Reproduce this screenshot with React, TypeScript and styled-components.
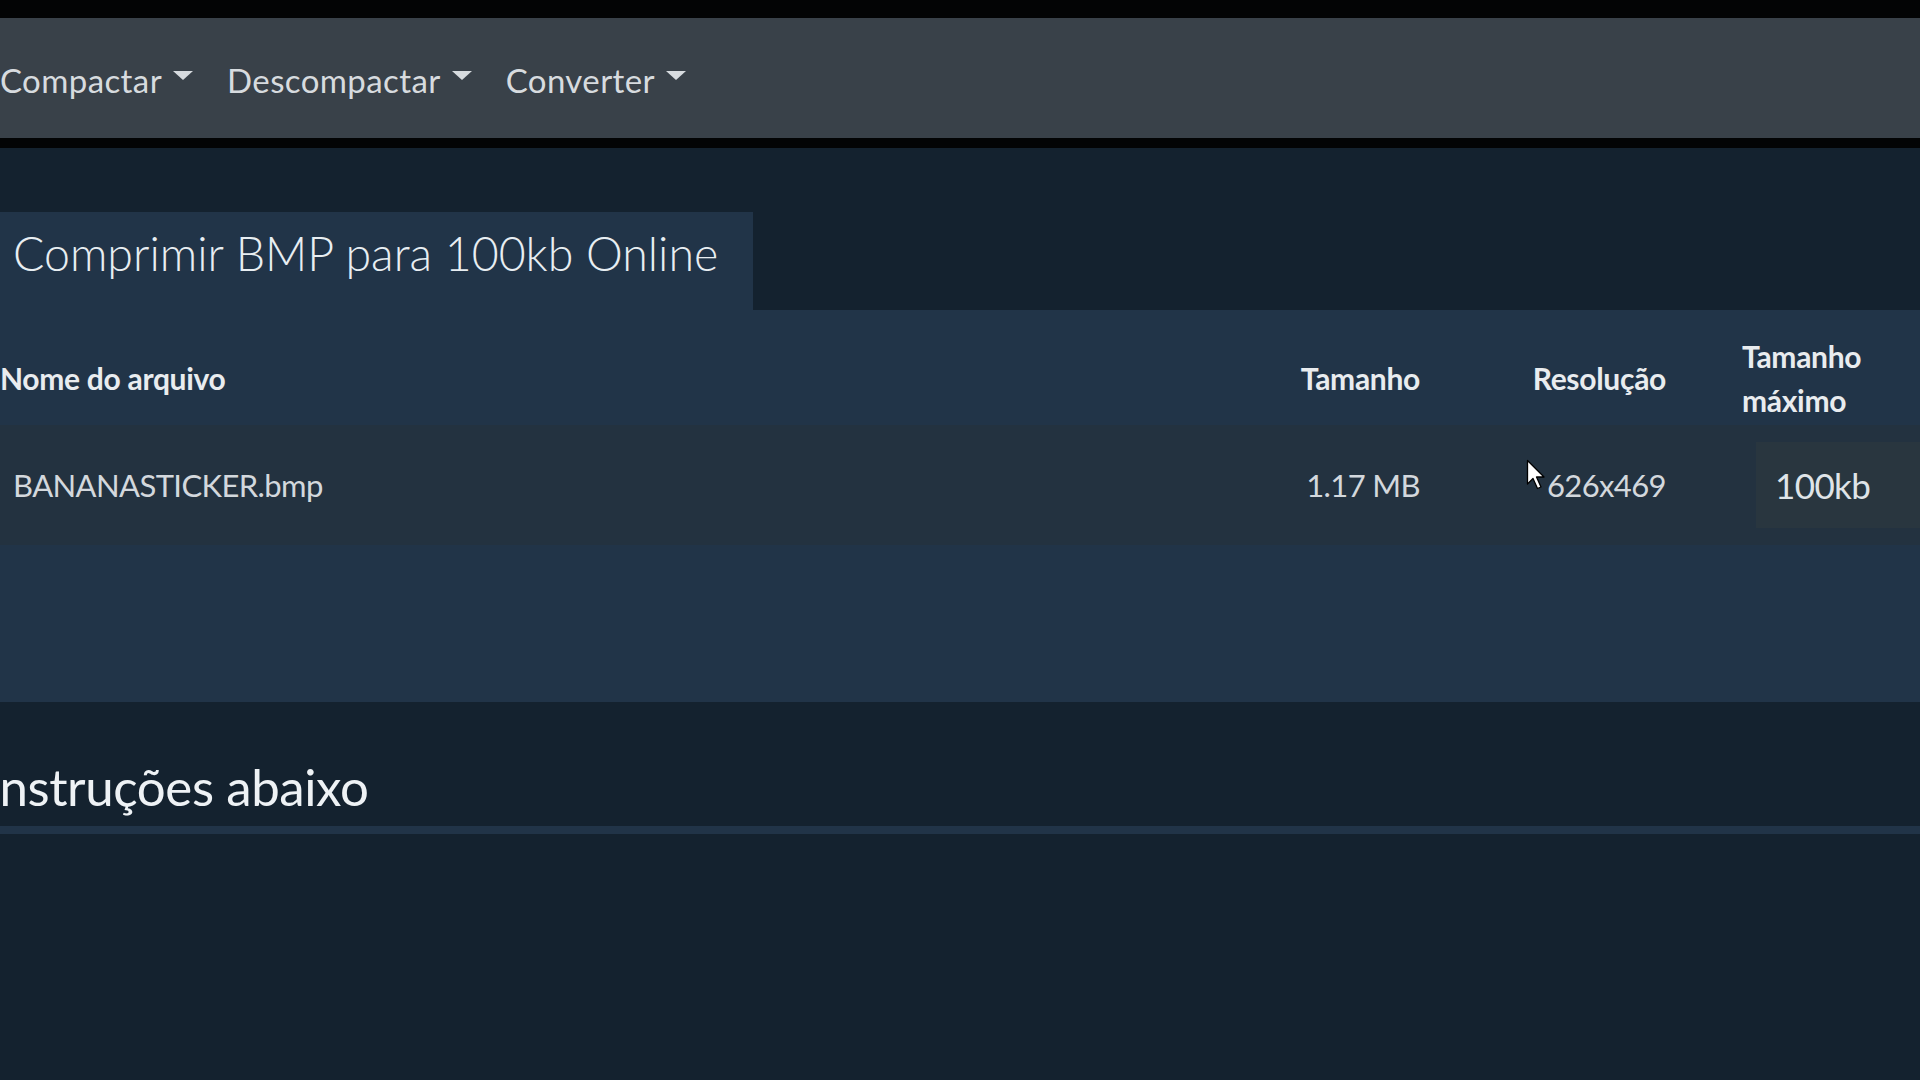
import styled, { createGlobalStyle } from "styled-components";

const GlobalStyle = createGlobalStyle`
	html, body {
		margin: 0;
		padding: 0;
		background: #14222f;
		overflow: hidden;
	}
	body {
		font-family: Lato, "Open Sans", sans-serif;
		color: #dde3e8;
	}
	* { box-sizing: border-box; }
`;

const Page = styled.div`
	width: 1920px;
	height: 1080px;
	overflow: hidden;
	background: #14222f;
	position: relative;
`;

const NavBar = styled.nav`
	height: 148px;
	background: #394149;
	border-top: 18px solid #030405;
	border-bottom: 10px solid #030405;
	display: flex;
	align-items: center;
	gap: 34px;
	padding-left: 0;
	padding-top: 3px;
`;

const NavItem = styled.span`
	display: flex;
	align-items: center;
	font-size: 33px;
	color: #d7dbdf;
	letter-spacing: 0.4px;

	&::after {
		content: "";
		display: inline-block;
		margin-left: 11px;
		margin-top: -8px;
		border-top: 9px solid #d7dbdf;
		border-left: 10px solid transparent;
		border-right: 10px solid transparent;
	}
`;

const Main = styled.main`
	margin-left: -14px;
	width: 1990px;
	padding-top: 64px;
`;

const TitleTab = styled.div`
	width: 767px;
	height: 98px;
	background: #213448;
	display: flex;
	align-items: center;
	padding-left: 27px;
	padding-bottom: 16px;
`;

const Title = styled.h1`
	margin: 0;
	font-size: 46.5px;
	font-weight: 300;
	color: #e8eef2;
	letter-spacing: 0;
`;

const Panel = styled.section`
	background: #213448;
	padding-bottom: 157px;
`;

const Row = styled.div<{ $head?: boolean }>`
	display: grid;
	grid-template-columns: 1284px 150px 246px 300px;
	align-items: center;
	height: ${(p) => (p.$head ? "115px" : "120px")};
	padding-top: ${(p) => (p.$head ? "20px" : "0")};
	background: ${(p) => (p.$head ? "#213448" : "#233240")};
	position: relative;
`;

const HeadCell = styled.div<{ $align?: string }>`
	font-size: 30px;
	font-weight: 700;
	color: #e9ecef;
	line-height: 44px;
	letter-spacing: -0.3px;
	text-align: ${(p) => p.$align || "left"};
	padding-left: 14px;
`;

const MaxHead = styled(HeadCell)`
	padding-left: 76px;
	width: 240px;
`;

const Cell = styled.div<{ $align?: string }>`
	font-size: 31px;
	color: #d3d8dd;
	letter-spacing: -0.6px;
	text-align: ${(p) => p.$align || "left"};
	padding-left: ${(p) => (p.$align ? "0" : "27px")};
`;

const SizeInput = styled.div`
	margin-left: 90px;
	width: 200px;
	height: 86px;
	background: #29363f;
	display: flex;
	align-items: center;
	padding-left: 19px;
	font-size: 35px;
	color: #dfe4e8;
	letter-spacing: -0.6px;
`;

const Cursor = styled.svg`
	position: absolute;
	left: 1540px;
	top: 34px;
`;

const Instructions = styled.h2`
	margin: 0;
	padding: 56px 0 10px 0;
	font-size: 51px;
	font-weight: 400;
	color: #eef2f5;
	letter-spacing: -0.4px;
	line-height: 58px;
	border-bottom: 8px solid #213448;
`;

export default function App() {
	return (
		<Page>
			<GlobalStyle />
			<NavBar>
				<NavItem>Compactar</NavItem>
				<NavItem>Descompactar</NavItem>
				<NavItem>Converter</NavItem>
			</NavBar>
			<Main>
				<TitleTab>
					<Title>Comprimir BMP para 100kb Online</Title>
				</TitleTab>
				<Panel>
					<Row $head>
						<HeadCell>Nome do arquivo</HeadCell>
						<HeadCell $align="right">Tamanho</HeadCell>
						<HeadCell $align="right">Resolução</HeadCell>
						<MaxHead>Tamanho máximo</MaxHead>
					</Row>
					<Row>
						<Cell>BANANASTICKER.bmp</Cell>
						<Cell $align="right">1.17 MB</Cell>
						<Cell $align="right">626x469</Cell>
						<SizeInput>100kb</SizeInput>
						<Cursor width="20" height="32" viewBox="0 0 20 32">
							<path
								d="M1.5 1.5 L1.5 25 L7 19.5 L11.5 29.5 L15 28 L10.5 18 L18 18 Z"
								fill="#ffffff"
								stroke="#000000"
								strokeWidth="1.3"
								strokeLinejoin="round"
							/>
						</Cursor>
					</Row>
				</Panel>
				<Instructions>Instruções abaixo</Instructions>
			</Main>
		</Page>
	);
}
